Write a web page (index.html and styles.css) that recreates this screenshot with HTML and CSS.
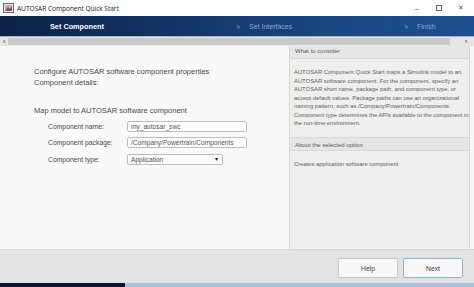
FILE: index.html
```html
<!DOCTYPE html>
<html>
<head>
<meta charset="utf-8">
<link rel="stylesheet" href="styles.css">
</head>
<body>
<div class="window">
  <div class="titlebar">
    <svg class="appicon" width="11" height="10" viewBox="0 0 11 10">
      <rect x="0.5" y="0.5" width="10" height="9" fill="#e8e8e8" stroke="#6a6a6a"/>
      <rect x="2" y="2" width="7" height="6" fill="#9fb7cf"/>
      <path d="M2 8 L5 4 L7 6 L9 3 L9 8 Z" fill="#b0413a"/>
    </svg>
    <span class="title">AUTOSAR Component Quick Start</span>
    <div class="controls">
      <span class="ctl min">&#8211;</span>
      <span class="ctl max"><span class="box"></span></span>
      <span class="ctl close">&#10005;</span>
    </div>
  </div>
  <div class="steps">
    <div class="step active">Set Component</div>
    <div class="step"><span class="arrow">&gt;</span>Set Interfaces</div>
    <div class="step"><span class="arrow">&gt;</span>Finish</div>
  </div>
  <div class="hscroll">
    <span class="sarrow">&#8249;</span>
    <div class="thumb"></div>
    <span class="sarrow">&#8250;</span>
  </div>
  <div class="main">
    <div class="left">
      <p class="line">Configure AUTOSAR software component properties</p>
      <p class="line">Component details:</p>
      <p class="line section">Map model to AUTOSAR software component</p>
      <div class="form">
        <label class="lbl">Component name:</label>
        <div class="input wide">my_autosar_swc</div>
        <label class="lbl">Component package:</label>
        <div class="input wide">/Company/Powertrain/Components</div>
        <label class="lbl">Component type:</label>
        <div class="input select">Application<span class="caret">&#9662;</span></div>
      </div>
    </div>
    <div class="right">
      <div class="band first">What to consider</div>
      <p class="para">AUTOSAR Component Quick Start maps a Simulink model to an<br>AUTOSAR software component. For the component, specify an<br>AUTOSAR short name, package path, and component type, or<br>accept default values. Package paths can use an organizational<br>naming pattern, such as /Company/Powertrain/Components.<br>Component type determines the APIs available to the component in<br>the run-time environment.</p>
      <div class="band">About the selected option</div>
      <p class="para">Creates application software component</p>
    </div>
    <div class="edge"></div>
  </div>
  <div class="footer">
    <button class="btn">Help</button>
    <button class="btn primary">Next</button>
  </div>
  <div class="taskbar"><div class="tdark"></div></div>
</div>
</body>
</html>
```
FILE: styles.css
```css
* { box-sizing: border-box; }
html, body { margin: 0; padding: 0; }
body {
  width: 474px;
  height: 287px;
  overflow: hidden;
  font-family: "Liberation Sans", Arial, sans-serif;
  color: #4a4a4a;
  background: #f9f9f9;
}
.window {
  display: flex;
  flex-direction: column;
  width: 474px;
  height: 287px;
}
.titlebar {
  height: 16px;
  background: #ffffff;
  display: flex;
  align-items: center;
  padding-left: 3px;
  flex: none;
}
.appicon { flex: none; margin-right: 3px; }
.title {
  font-family: "Open Sans", "Liberation Sans", sans-serif;
  font-size: 6.6px;
  color: #222;
  letter-spacing: -0.05px;
}
.controls {
  margin-left: auto;
  display: flex;
  align-items: center;
  height: 16px;
}
.ctl {
  width: 22px;
  text-align: center;
  font-size: 7px;
  color: #555;
  display: flex;
  justify-content: center;
  align-items: center;
}
.box {
  display: block;
  width: 6px;
  height: 6px;
  border: 1px solid #666;
}
.ctl.close { font-size: 6.5px; margin-right: 2px; }
.steps {
  height: 21px;
  flex: none;
  display: grid;
  grid-template-columns: 236px 168px 1fr;
  align-items: center;
  background: linear-gradient(90deg, #0c2247 0%, #133466 35%, #1a4783 70%, #1c4f8f 100%);
  border-bottom: 1px solid #9fb3cc;
  font-size: 7px;
  color: #8ea8cb;
}
.step { white-space: nowrap; }
.step.active {
  padding-left: 50px;
  font-weight: bold;
  color: #ffffff;
  font-size: 7.3px;
}
.arrow { display: inline-block; width: 13px; }
.hscroll {
  height: 9px;
  flex: none;
  display: flex;
  align-items: center;
  background: #e6e6e6;
  font-size: 8px;
  color: #333;
}
.sarrow { width: 8px; text-align: center; line-height: 9px; }
.hscroll .sarrow:last-child { margin-left: auto; width: 16px; }
.thumb {
  width: 442px;
  height: 7px;
  background: #c9c9c9;
}
.main {
  height: 204px;
  flex: none;
  display: flex;
  background: #f9f9f9;
  border-bottom: 1px solid #d6d6d6;
}
.left {
  width: 289px;
  flex: none;
  padding: 20px 0 0 34px;
}
.line {
  margin: 0;
  font-size: 7.5px;
  line-height: 11px;
  color: #4a4a4a;
  white-space: nowrap;
}
.section { margin-top: 17px; }
.form {
  display: grid;
  grid-template-columns: 79px auto;
  row-gap: 5.5px;
  margin-top: 4.5px;
  padding-left: 14px;
  align-items: center;
  justify-items: start;
}
.lbl {
  font-size: 6.8px;
  color: #4a4a4a;
  line-height: 11px;
}
.input {
  height: 11px;
  border: 1px solid #bdbdbd;
  border-radius: 2px;
  background: #fff;
  font-size: 6.6px;
  line-height: 9px;
  padding-left: 3px;
  color: #555;
  white-space: nowrap;
}
.input.wide { width: 120px; }
.input.select {
  width: 96px;
  display: flex;
  align-items: center;
  background: #fcfcfc;
}
.caret {
  margin-left: auto;
  margin-right: 4px;
  font-size: 6px;
  color: #111;
}
.right {
  width: 181px;
  flex: none;
  background: #efefef;
  border-left: 1px solid #d4d4d4;
  border-right: 1px solid #d4d4d4;
}
.band {
  height: 14px;
  line-height: 14px;
  background: #e6e6e6;
  border-top: 1px solid #d8d8d8;
  border-bottom: 1px solid #d8d8d8;
  font-size: 6px;
  padding-left: 5px;
  color: #5a5a5a;
}
.band.first {
  height: 13px;
  line-height: 11px;
  border-top: none;
}
.para {
  margin: 9px 0 9px 0;
  padding-left: 4px;
  font-size: 5.85px;
  line-height: 8.5px;
  color: #5e5e5e;
  white-space: nowrap;
}
.edge {
  flex: 1;
  background: #f7f7f7;
}
.footer {
  height: 33px;
  flex: none;
  background: #e3e3e3;
  display: flex;
  justify-content: flex-end;
  align-items: center;
  gap: 5px;
  padding: 3px 11px 0 0;
}
.btn {
  width: 60px;
  height: 20px;
  border: 1px solid #c6c6c6;
  border-radius: 2px;
  background: #f8f8f8;
  font-family: "Liberation Sans", Arial, sans-serif;
  font-size: 6.8px;
  color: #444;
  padding: 0;
}
.btn.primary { border-color: #86b8e4; }
.taskbar {
  flex: 1;
  background: #a9c2da;
  display: flex;
}
.tdark { width: 125px; background: #0b1830; }
```
